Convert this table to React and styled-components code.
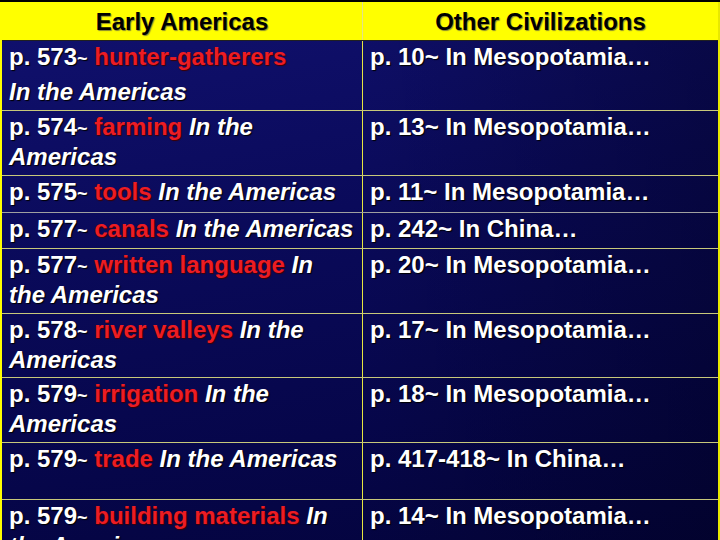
import React from "react";
import styled, { createGlobalStyle } from "styled-components";

const Global = createGlobalStyle`
  html, body { margin: 0; padding: 0; background: #000; }
  body { font-family: "Liberation Sans", Arial, sans-serif; }
`;

const Page = styled.div`
  width: 720px;
  height: 540px;
  overflow: hidden;
  background: #000;
  padding-top: 2px;
  box-sizing: border-box;
`;

const Frame = styled.div`
  border-left: 2px solid #ffff00;
  border-right: 2px solid #e8e800;
  box-sizing: border-box;
  width: 720px;
`;

const Grid = styled.div`
  display: grid;
  grid-template-columns: 361px 1fr;
  height: ${(p) => p.h}px;
  box-sizing: border-box;
  border-bottom: 1px solid ${(p) => p.line || "#c8c87a"};
`;

const HeaderGrid = styled(Grid)`
  background: #ffff00;
  border-bottom: 1px solid #202020;
`;

const HeadCell = styled.div`
  display: flex;
  align-items: center;
  justify-content: center;
  font-size: 24px;
  font-weight: bold;
  color: #000;
  text-shadow: 1px 1px 1px #8a8a30;
  border-right: ${(p) => (p.first ? "1px solid #e0e090" : "none")};
  padding-top: 1px;
`;

const Body = styled.div`
  background: linear-gradient(170deg, #10106c 0%, #0a0a5a 35%, #06064a 70%, #03033a 100%);
`;

const Cell = styled.div`
  padding: 2px 4px 0 7px;
  font-size: 24px;
  line-height: 28px;
  font-weight: bold;
  color: #ffffff;
  text-shadow: 1px 1px 1px #000;
  border-right: ${(p) => (p.first ? "1px solid #e6e640" : "none")};
  background: ${(p) =>
    p.first
      ? "transparent"
      : "linear-gradient(90deg, rgba(0,0,0,0) 0%, rgba(0,0,20,0.35) 100%)"};
  overflow: hidden;
`;

const Para = styled.div`
  margin-bottom: ${(p) => p.gap || 0}px;
`;

const Red = styled.span`
  color: #ec1c24;
  text-shadow: 1px 1px 1px #400000;
`;

const Em = styled.i`
  font-style: italic;
`;

const Tilde = styled.span`
  font-size: 18px;
`;

const rows = [
  { h: 70, first: true, right: "p. 10~ In Mesopotamia…" },
  { h: 65, page: "574", topic: "farming", right: "p. 13~ In Mesopotamia…" },
  { h: 37, page: "575", topic: "tools", right: "p. 11~ In Mesopotamia…", line: "#a0a0a0" },
  { h: 36, page: "577", topic: "canals", right: "p. 242~ In China…" },
  { h: 65, page: "577", topic: "written language", breakAfterIn: true, right: "p. 20~ In Mesopotamia…" },
  { h: 64, page: "578", topic: "river valleys", right: "p. 17~ In Mesopotamia…" },
  { h: 65, page: "579", topic: "irrigation", right: "p. 18~ In Mesopotamia…" },
  { h: 57, page: "579", topic: "trade", right: "p. 417-418~ In China…" },
  { h: 60, page: "579", topic: "building materials", right: "p. 14~ In Mesopotamia…", line: "transparent" },
];

export default function App() {
  return (
    <Page>
      <Global />
      <Frame>
        <HeaderGrid h={39}>
          <HeadCell first>Early Americas</HeadCell>
          <HeadCell>Other Civilizations</HeadCell>
        </HeaderGrid>
        <Body>
          {rows.map((r, i) => (
            <Grid key={i} h={r.h} line={r.line}>
              <Cell first>
                {r.first ? (
                  <>
                    <Para gap={5}>
                      p. 573<Tilde>~</Tilde> <Red>hunter-gatherers</Red>
                    </Para>
                    <Para>
                      <Em>In the Americas</Em>
                    </Para>
                  </>
                ) : (
                  <>
                    p. {r.page}
                    <Tilde>~</Tilde> <Red>{r.topic}</Red>{" "}
                    {r.breakAfterIn ? (
                      <Em>
                        In
                        <br />
                        the Americas
                      </Em>
                    ) : (
                      <Em>In the Americas</Em>
                    )}
                  </>
                )}
              </Cell>
              <Cell>{r.right}</Cell>
            </Grid>
          ))}
        </Body>
      </Frame>
    </Page>
  );
}
